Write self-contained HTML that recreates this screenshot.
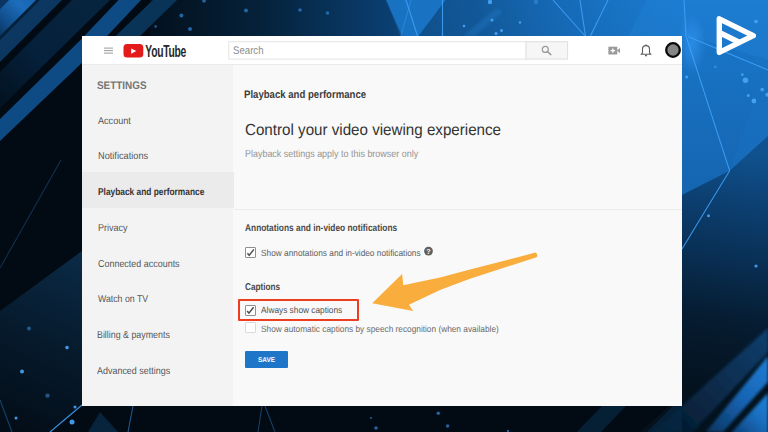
<!DOCTYPE html>
<html><head><meta charset="utf-8">
<style>
*{margin:0;padding:0;box-sizing:border-box}
html,body{width:768px;height:432px;overflow:hidden;background:#061527;font-family:"Liberation Sans",sans-serif}
.bg{position:absolute;left:0;top:0;width:768px;height:432px}
.r{position:absolute}
.t{position:absolute;white-space:nowrap;line-height:1;transform-origin:0 0;text-rendering:geometricPrecision}
.cb{position:absolute;width:11px;height:11px;border:1px solid #8f8f8f;background:#fff;border-radius:1px}
.cb.off{border-color:#dadada}
</style></head><body>
<div id="wrap" style="position:absolute;left:0;top:0;width:768px;height:432px;filter:blur(0.35px)">
<svg class="bg" width="768" height="432" viewBox="0 0 768 432">
 <defs>
  <filter id="fb" x="-20%" y="-20%" width="140%" height="140%"><feGaussianBlur stdDeviation="1.6"/></filter>
  <linearGradient id="gTop" x1="0" y1="0" x2="1" y2="0">
   <stop offset="0" stop-color="#03101d"/>
   <stop offset="0.45" stop-color="#05223b"/>
   <stop offset="1" stop-color="#0b4176"/>
  </linearGradient>
  <linearGradient id="gRight" x1="0" y1="0" x2="0" y2="432" gradientUnits="userSpaceOnUse">
   <stop offset="0" stop-color="#1a78cc"/>
   <stop offset="0.45" stop-color="#1565b0"/>
   <stop offset="1" stop-color="#1462ab"/>
  </linearGradient>
  <linearGradient id="gLowR" x1="745" y1="150" x2="705" y2="390" gradientUnits="userSpaceOnUse">
   <stop offset="0" stop-color="#10528f"/>
   <stop offset="0.22" stop-color="#0c4072"/>
   <stop offset="0.45" stop-color="#092f54"/>
   <stop offset="0.7" stop-color="#061c31"/>
   <stop offset="1" stop-color="#04121e"/>
  </linearGradient>
  <linearGradient id="gBlob" x1="0" y1="0" x2="1" y2="0">
   <stop offset="0" stop-color="#0a3358"/>
   <stop offset="0.5" stop-color="#1f72c0"/>
   <stop offset="1" stop-color="#0a3358"/>
  </linearGradient>
  <linearGradient id="gLL" x1="82" y1="251" x2="0" y2="432" gradientUnits="userSpaceOnUse">
   <stop offset="0" stop-color="#0b2b47"/>
   <stop offset="0.5" stop-color="#061a2c"/>
   <stop offset="1" stop-color="#030c16"/>
  </linearGradient>
  <linearGradient id="gS" x1="706" y1="432" x2="768" y2="356" gradientUnits="userSpaceOnUse">
   <stop offset="0" stop-color="#0a3560"/>
   <stop offset="0.5" stop-color="#1764b4"/>
   <stop offset="1" stop-color="#207ed4"/>
  </linearGradient>
  <linearGradient id="gS2" x1="732" y1="432" x2="768" y2="393" gradientUnits="userSpaceOnUse">
   <stop offset="0" stop-color="#0c4278"/>
   <stop offset="0.5" stop-color="#196cbc"/>
   <stop offset="1" stop-color="#2284dc"/>
  </linearGradient>
  <radialGradient id="gBlobR" cx="0.5" cy="0.5" r="0.5">
   <stop offset="0" stop-color="#2a7fd0"/>
   <stop offset="0.5" stop-color="#1a5fa5" stop-opacity="0.8"/>
   <stop offset="1" stop-color="#0a3358" stop-opacity="0"/>
  </radialGradient>
  <linearGradient id="gGl" x1="1" y1="0" x2="0" y2="1">
   <stop offset="0" stop-color="#1865b2"/>
   <stop offset="0.3" stop-color="#1c6dbb"/>
   <stop offset="0.7" stop-color="#114f8e"/>
   <stop offset="1" stop-color="#0a3560"/>
  </linearGradient>
  <radialGradient id="gGlow" cx="0.5" cy="0.5" r="0.5">
   <stop offset="0" stop-color="#3aa0ff" stop-opacity="0.55"/>
   <stop offset="1" stop-color="#3aa0ff" stop-opacity="0"/>
  </radialGradient>
  <linearGradient id="gB" x1="100" y1="0" x2="0" y2="100" gradientUnits="userSpaceOnUse">
   <stop offset="0" stop-color="#07243f"/>
   <stop offset="0.6" stop-color="#05203a"/>
   <stop offset="1" stop-color="#031322"/>
  </linearGradient>
  <linearGradient id="gTB" x1="386" y1="0" x2="700" y2="0" gradientUnits="userSpaceOnUse">
   <stop offset="0" stop-color="#0a3a68" stop-opacity="0.7"/>
   <stop offset="0.3" stop-color="#0a3a68" stop-opacity="0.5"/>
   <stop offset="0.6" stop-color="#0d4a85" stop-opacity="0.25"/>
   <stop offset="1" stop-color="#1a78cc" stop-opacity="0"/>
  </linearGradient>
  <linearGradient id="gM" x1="668" y1="432" x2="768" y2="330" gradientUnits="userSpaceOnUse">
   <stop offset="0" stop-color="#051a2e"/>
   <stop offset="1" stop-color="#0c3f6e"/>
  </linearGradient>
 </defs>
 <rect width="768" height="432" fill="#020a13"/>
 <!-- top band dark gradient -->
 <rect x="150" y="0" width="250" height="40" fill="url(#gTop)"/>
 <!-- upper-left stripes -->
 <g>
  <path d="M0 0 H42 L0 40 Z" fill="#05213a"/>
  <path d="M0 0 H9 L0 9 Z" fill="#0a3560"/>
  <path d="M9 0 H36 L0 36 V9 Z" fill="url(#gGl)"/>
  <path d="M40 0 H62 L0 62 V40 Z" fill="#0b3760"/>
  <path d="M72 0 H110 L0 108 V72 Z" fill="url(#gB)"/>
  <path d="M118.5 0 H141 L81 63.8 L0 141 V119 L81 39.5 Z" fill="#0e4b84"/>
  <path d="M153 0 H177 L100 75 L100 51 Z" fill="#093458"/>
 </g>
 <!-- right bright region -->
 <path d="M386.2 0 H768 V432 H682 V40 H402 Z" fill="url(#gRight)"/>
 <path d="M386.2 0 H700 V40 H402 Z" fill="url(#gTB)"/>
 <path d="M386.2 0 H445.6 L418.5 36 H402 Z" fill="#1b7ad0" opacity="0.8"/>
 <path d="M463 36 L497 8 L503 12 L475 36 Z" fill="#2a8ae0" opacity="0.25" filter="url(#fb)"/>
 <path d="M682 195 L729.6 170.7 L768 136 V432 H640 L682 395 Z" fill="url(#gLowR)"/>
 <path d="M729.6 170.7 L768 136 V60 Z" fill="#1b74c6" opacity="0.35"/>
 <path d="M646.7 0 H768 V60 L690 36 H628 Z" fill="#2a90e8" opacity="0.2"/>
 <ellipse cx="692" cy="44" rx="14" ry="30" fill="url(#gGlow)"/>
 <!-- lower right stripes -->
 <g filter="url(#fb)">
 <path d="M653 432 L768 328 V352 L693 432 Z" fill="url(#gM)"/>
 <path d="M706 432 L768 356 V382 L723 432 Z" fill="url(#gS)"/>
 <path d="M732 432 L768 393 V440 H732 Z" fill="url(#gS2)"/>
 </g>
 <path d="M576.7 432 L602 406 H626 L601 432 Z" fill="#072844" opacity="0.7"/>
 <path d="M647 432 L673 406 H682 V432 Z" fill="#072a48" opacity="0.6"/>
 <!-- lower left lighter polygon -->
 <path d="M0 311 L82 251 V406 L50 432 H0 Z" fill="url(#gLL)"/>
 <path d="M88 432 L100 412 L118 432 Z" fill="#0a2b48" opacity="0.8"/>
 <!-- lines -->
 <g stroke="#3fa0f8" stroke-width="1.1" fill="none" opacity="0.9">
  <path d="M61 160 L0 268" opacity="0.3"/>
  <path d="M82 405 L50 432"/>
  <path d="M406 0 L417.5 36"/><path d="M411 0 L400.8 36" opacity="0.5"/>
  <path d="M442.5 0 V36"/>
  <path d="M553 0 L585 36"/>
  <path d="M580 0 L585.5 36"/>
  <path d="M608 0 L590.4 36"/>
  <path d="M684 0 L686 36"/>
  <path d="M686 36 L729.6 170.7 L682 249"/>
  
  <path d="M688 36.5 L768 70"/>
  <path d="M128 432 L133 406" opacity="0.6"/>
  <path d="M258 432 L262 406" opacity="0.4"/>
  <path d="M275 432 L265 406" opacity="0.4"/>
  <path d="M0 400 L12 432" opacity="0.4"/>
 </g>
 <!-- dots -->
 <g fill="#2c78c0" opacity="0.8">
  <circle cx="204" cy="1" r="1.8"/><circle cx="181.4" cy="15.6" r="2"/><circle cx="190" cy="29" r="2"/>
  <circle cx="155.6" cy="26.5" r="1.2"/><circle cx="246" cy="10.6" r="2"/><circle cx="300" cy="10" r="1.8"/>
  <circle cx="327.5" cy="13" r="1.8"/>
  <circle cx="371" cy="418" r="1"/><circle cx="376" cy="428" r="1.8"/><circle cx="438.3" cy="413.3" r="1.8"/>
  <circle cx="447.6" cy="426" r="1.8"/><circle cx="508" cy="431" r="1.2"/>
 </g>
 <g fill="#4aa6fa" opacity="0.9">
<circle cx="490" cy="2" r="2.2"/><circle cx="492" cy="20" r="1.5"/>
  <circle cx="464" cy="26" r="1.3"/><circle cx="520" cy="22.5" r="1.2"/><circle cx="501.5" cy="30.5" r="1.5"/>
  <circle cx="496" cy="33.5" r="1.5"/><circle cx="536" cy="2" r="2.2" opacity="0.4"/>
  <circle cx="745.5" cy="80.2" r="2.8"/><circle cx="742.4" cy="74.6" r="1.3"/><circle cx="762.2" cy="89.6" r="1.8"/><circle cx="748.3" cy="95.4" r="1.5"/><circle cx="753.9" cy="101" r="2.4"/><circle cx="767.4" cy="94.8" r="2"/><circle cx="715.3" cy="66.7" r="1.5" opacity="0.5"/>
  <circle cx="686.6" cy="77" r="1.5"/><circle cx="708.5" cy="215.8" r="1.5"/><circle cx="756" cy="21.5" r="1.8"/>
  <circle cx="29" cy="328.5" r="2" opacity="0.5"/><circle cx="67" cy="347.6" r="1.8"/><circle cx="22" cy="371.5" r="2"/>
  <circle cx="47.5" cy="395.6" r="2.2" opacity="0.5"/><circle cx="16" cy="418" r="1.5"/><circle cx="72" cy="422" r="2.5"/>
  <circle cx="75" cy="407" r="1.5"/><circle cx="756" cy="266" r="1.6"/>
 </g>
 <!-- logo -->
 <path d="M719.3 18.8 L753.3 35.7 L719.3 52.4 Z" stroke="#fff" stroke-width="5.4" stroke-linejoin="round" fill="none"/>
 <path d="M719.3 32.4 L740.5 42.9" stroke="#fff" stroke-width="5.6"/>
</svg>

<div class="r" style="left:82px;top:36px;width:600px;height:370px;background:#f9f9f9"></div>
<div class="r" style="left:82px;top:36px;width:600px;height:29px;background:#fff;border-bottom:1px solid #ebebeb"></div>
<div class="r" style="left:82px;top:65px;width:151px;height:341px;background:#f3f3f3"></div>
<div class="r" style="left:82px;top:172px;width:151.5px;height:36px;background:#ebebeb"></div>
<div class="r" style="left:234px;top:209px;width:448px;height:1px;background:#ebebeb"></div>
<div class="cb" style="left:244.9px;top:247.3px"></div>
<div class="cb" style="left:244.6px;top:305.2px"></div>
<div class="cb off" style="left:244.6px;top:322px"></div>
<div class="r" style="left:245px;top:351.25px;width:43.4px;height:17.2px;background:#1f76c9;border-radius:1px"></div>
<div class="r" style="left:237.9px;top:298.75px;width:121px;height:22px;border:2px solid #ec3f22;border-radius:1px"></div>
<svg class="bg" width="768" height="432" viewBox="0 0 768 432">
 <!-- hamburger -->
 <g fill="#9a9a9a">
  <rect x="104" y="47.6" width="9" height="1"/>
  <rect x="104" y="50.1" width="9" height="1"/>
  <rect x="104" y="52.6" width="9" height="1"/>
 </g>
 <!-- youtube red -->
 <rect x="123.5" y="44" width="19.8" height="13.6" rx="3.6" fill="#e31b1b"/>
 <path d="M131.2 48.4 L136.3 51.1 L131.2 53.8 Z" fill="#fff"/>
 <!-- search input -->
 <rect x="228.8" y="41.7" width="297.5" height="17.4" fill="#fff" stroke="#e3e3e3" stroke-width="1"/>
 <rect x="526" y="41.7" width="41.6" height="17.4" fill="#f6f6f6" stroke="#dedede" stroke-width="1"/>
 <circle cx="545.3" cy="49.4" r="3" fill="none" stroke="#9a9a9a" stroke-width="1.2"/>
 <path d="M547.4 51.5 L550.8 54.6" stroke="#9a9a9a" stroke-width="1.5" stroke-linecap="round"/>
 <!-- camera -->
 <rect x="608.4" y="46.7" width="8.9" height="7.8" fill="#9a9a9a"/>
 <path d="M617 50.6 L620 47.9 L620 53.3 Z" fill="#9a9a9a"/>
 <path d="M610.6 50.6 H615.1 M612.85 48.4 V52.8" stroke="#fff" stroke-width="1.3"/>
 <!-- bell -->
 <path d="M641 54.3 L642.5 52.8 L642.5 49.2 C642.5 47 644 45.6 646 45.6 C648 45.6 649.5 47 649.5 49.2 L649.5 52.8 L651 54.3 Z" fill="none" stroke="#5e5e5e" stroke-width="1.1" stroke-linejoin="round"/>
 <circle cx="646" cy="44.9" r="0.7" fill="#5e5e5e"/>
 <path d="M645 55.6 H647" stroke="#5e5e5e" stroke-width="1.1"/>
 <!-- avatar -->
 <circle cx="673" cy="50" r="6.8" fill="#858585" stroke="#0a0a0a" stroke-width="2.3"/>
 <!-- checkmarks -->
 <path d="M247.4 253.2 L249.2 255.3 L253.9 249.4" fill="none" stroke="#4f4f4f" stroke-width="1.5"/>
 <path d="M247.1 311.0 L248.9 313.1 L253.6 307.2" fill="none" stroke="#4f4f4f" stroke-width="1.5"/>
 <!-- help -->
 <circle cx="428.5" cy="251.1" r="4.4" fill="#5f5f5f"/>
 <text x="428.5" y="254.2" font-family="Liberation Sans" font-weight="bold" font-size="7.2" fill="#fff" text-anchor="middle">?</text>
 <!-- arrow -->
 <path d="M372.2 303.3 L402.1 273.9 L403.3 285.3 L440 277.4 L470 269.5 L535.5 252.6 Q538.5 254.6 536.6 257.2 L470 278.8 L440 289.9 L408.9 304.7 L413.2 311.1 Z" fill="#f8ad3d"/>
 <!-- youtube wordmark -->
 <text x="145.3" y="56.7" font-family="Liberation Sans" font-weight="bold" font-size="16" fill="#282828" transform="translate(145.3 0) scale(0.645 1) translate(-145.3 0)" style="letter-spacing:-0.4px">YouTube</text>
</svg>

<div class="t" style="left:97.30px;top:80.60px;font-size:11px;font-weight:bold;color:#767676;transform:scaleX(0.9)">SETTINGS</div>
<div class="t" style="left:97.50px;top:116.80px;font-size:10px;font-weight:normal;color:#555;transform:scaleX(0.91)">Account</div>
<div class="t" style="left:97.50px;top:152.40px;font-size:10px;font-weight:normal;color:#555;transform:scaleX(0.92)">Notifications</div>
<div class="t" style="left:97.50px;top:188.20px;font-size:10px;font-weight:bold;color:#333;transform:scaleX(0.835)">Playback and performance</div>
<div class="t" style="left:97.50px;top:224.00px;font-size:10px;font-weight:normal;color:#555;transform:scaleX(0.9)">Privacy</div>
<div class="t" style="left:97.50px;top:259.60px;font-size:10px;font-weight:normal;color:#555;transform:scaleX(0.895)">Connected accounts</div>
<div class="t" style="left:97.50px;top:295.40px;font-size:10px;font-weight:normal;color:#555;transform:scaleX(0.875)">Watch on TV</div>
<div class="t" style="left:97.40px;top:331.00px;font-size:10px;font-weight:normal;color:#555;transform:scaleX(0.885)">Billing &amp; payments</div>
<div class="t" style="left:97.40px;top:366.90px;font-size:10px;font-weight:normal;color:#555;transform:scaleX(0.895)">Advanced settings</div>
<div class="t" style="left:244.40px;top:90.10px;font-size:11px;font-weight:bold;color:#3c3c3c;transform:scaleX(0.872)">Playback and performance</div>
<div class="t" style="left:245.00px;top:122.90px;font-size:16px;font-weight:normal;color:#333;transform:scaleX(0.947)">Control your video viewing experience</div>
<div class="t" style="left:244.60px;top:149.90px;font-size:10px;font-weight:normal;color:#939393;transform:scaleX(0.895)">Playback settings apply to this browser only</div>
<div class="t" style="left:244.60px;top:223.90px;font-size:10px;font-weight:bold;color:#4a4a4a;transform:scaleX(0.835)">Annotations and in-video notifications</div>
<div class="t" style="left:260.90px;top:249.05px;font-size:9px;font-weight:normal;color:#606060;transform:scaleX(0.922)">Show annotations and in-video notifications</div>
<div class="t" style="left:244.70px;top:283.00px;font-size:10px;font-weight:bold;color:#4a4a4a;transform:scaleX(0.82)">Captions</div>
<div class="t" style="left:260.95px;top:306.45px;font-size:9px;font-weight:normal;color:#505050;transform:scaleX(0.923)">Always show captions</div>
<div class="t" style="left:261.00px;top:324.65px;font-size:9px;font-weight:normal;color:#6a6a6a;transform:scaleX(0.921)">Show automatic captions by speech recognition (when available)</div>
<div class="t" style="left:257.60px;top:357.05px;font-size:7px;font-weight:bold;color:#fff;transform:scaleX(0.927)">SAVE</div>
<div class="t" style="left:233.20px;top:46.40px;font-size:11px;font-weight:normal;color:#8c8c8c;transform:scaleX(0.875)">Search</div>
</div>
</body></html>
